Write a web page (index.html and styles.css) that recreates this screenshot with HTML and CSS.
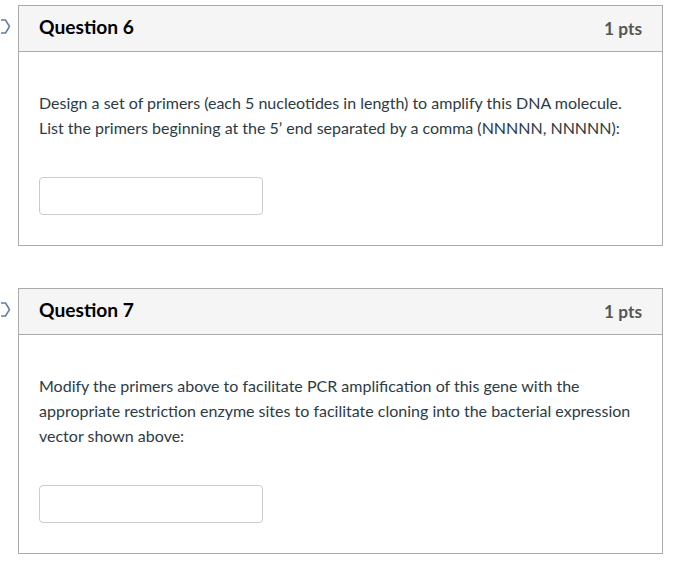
FILE: index.html
```html
<!DOCTYPE html>
<html lang="en">
<head>
<meta charset="utf-8">
<title>Quiz</title>
<link rel="stylesheet" href="styles.css">
</head>
<body>
<div class="quiz">
  <div class="question">
    <svg class="marker" width="12" height="16" viewBox="0 0 12 16"><path d="M-2 1 H4.5 L8.5 7.5 L4.5 14 H-2" fill="none" stroke="#5f7f9f" stroke-width="1.5" stroke-linejoin="round"/></svg>
    <div class="q-header">
      <span class="q-name">Question 6</span>
      <span class="q-pts">1 pts</span>
    </div>
    <div class="q-body">
      <p class="q-text">Design a set of primers (each 5 nucleotides in length) to amplify this DNA molecule. List the primers beginning at the 5’ end separated by a comma (NNNNN, NNNNN):</p>
      <input class="answer" type="text">
    </div>
  </div>
  <div class="question">
    <svg class="marker" width="12" height="16" viewBox="0 0 12 16"><path d="M-2 1 H4.5 L8.5 7.5 L4.5 14 H-2" fill="none" stroke="#5f7f9f" stroke-width="1.5" stroke-linejoin="round"/></svg>
    <div class="q-header">
      <span class="q-name">Question 7</span>
      <span class="q-pts">1 pts</span>
    </div>
    <div class="q-body">
      <p class="q-text">Modify the primers above to facilitate PCR amplification of this gene with the appropriate restriction enzyme sites to facilitate cloning into the bacterial expression vector shown above:</p>
      <input class="answer" type="text">
    </div>
  </div>
</div>
</body>
</html>
```

FILE: styles.css
```css
html, body {
  margin: 0;
  padding: 0;
  background: #ffffff;
}
body {
  font-family: Lato, "Liberation Sans", sans-serif;
  color: #2d3b45;
}
.quiz {
  padding: 5px 0 0 18px;
  display: flex;
  flex-direction: column;
  gap: 42px;
}
.question {
  position: relative;
  width: 643px;
  border: 1px solid #ababab;
}
.marker {
  position: absolute;
  left: -18px;
  top: 13px;
}
.q-header {
  background: #f5f5f5;
  border-bottom: 1px solid #ababab;
  display: flex;
  align-items: center;
  justify-content: space-between;
  padding: 0 20px;
  box-sizing: border-box;
  height: 46px;
}
.q-name {
  font-weight: 700;
  font-size: 19.2px;
  color: #000000;
  position: relative;
  top: -2px;
}
.q-pts {
  font-weight: 700;
  font-size: 17.3px;
  color: #555555;
}
.q-body {
  padding: 38px 20px 30px 20px;
}
.q-text {
  margin: 0;
  font-size: 16px;
  line-height: 25px;
}
.answer {
  display: block;
  margin-top: 37px;
  width: 224px;
  height: 38px;
  box-sizing: border-box;
  border: 1px solid #c7cdd1;
  border-radius: 4px;
  background: #fff;
  padding: 0 8px;
  font-family: inherit;
}
```
